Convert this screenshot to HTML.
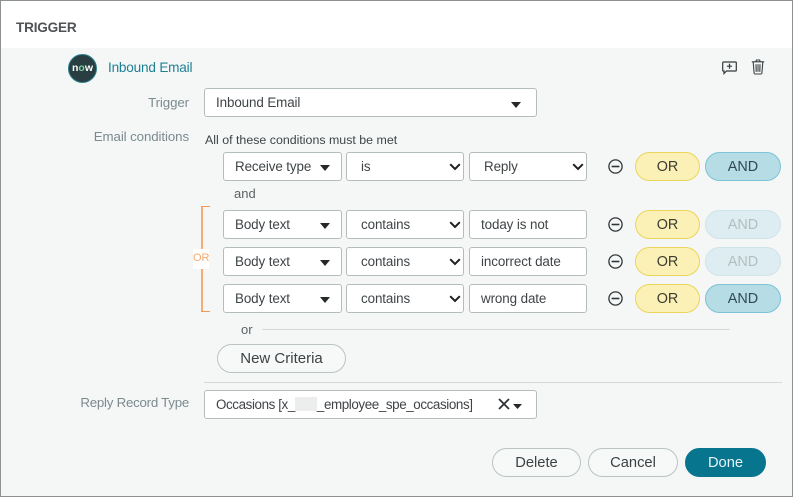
<!DOCTYPE html>
<html><head><meta charset="utf-8">
<style>
html,body{margin:0;padding:0;width:793px;height:497px;overflow:hidden;background:#f5f7f7}
body{position:relative;font-family:"Liberation Sans",sans-serif;color:#3a3f42}
.a{position:absolute;box-sizing:border-box;white-space:nowrap}
.t{font-size:13.3px;line-height:20px;height:20px;letter-spacing:-.1px}
.l{color:#7b8a8e;text-align:right;left:40px;width:149px}
.box{background:#fff;border:1px solid #b4bcbe;border-radius:3px;height:29px;font-size:13.4px;line-height:28px;padding-left:11px;color:#3f4447;letter-spacing:-.1px}
.pill{border-radius:15px;height:29px;font-size:14.4px;line-height:28px;text-align:center}
.or{left:635px;width:65px;background:#fbf1b6;border:1px solid #ead65c;color:#3d3d33}
.and{left:705px;width:76px;background:#b6dde5;border:1px solid #7cc3d5;color:#2f4a55}
.off{background:#deedf1;border:1px solid #cfe3ea;color:#b3bec2}
.btn{border:1px solid #bcc3c4;border-radius:15px;background:#f7f9f9;text-align:center;font-size:14.7px;line-height:28px;color:#3c4144;height:29px}
svg{position:absolute;overflow:visible}
</style></head>
<body>
<div class="a" style="left:0;top:0;width:793px;height:48px;background:#fff"></div>
<div class="a" style="left:16px;top:18px;font-size:13.6px;line-height:20px;font-weight:bold;color:#505355;letter-spacing:-.2px">TRIGGER</div>

<div class="a" style="left:68px;top:54px;width:29px;height:29px;border-radius:50%;background:#293e40;border:1px solid #2b7f8e"></div>
<div class="a" style="left:68px;top:61px;width:29px;text-align:center;color:#fff;font:bold 10.5px/15px 'Liberation Sans',sans-serif">n<span style="color:#7fd1a5">o</span>w</div>
<div class="a t" style="left:108px;top:58px;color:#1f8094;font-size:13.6px;letter-spacing:-.2px">Inbound Email</div>

<svg style="left:722px;top:60px" width="15" height="15" viewBox="0 0 15 15" fill="none" stroke="#33383a" stroke-width="1.2"><path d="M1.5 2h12a.8.8 0 0 1 .8.8v7.4a.8.8 0 0 1-.8.8H4.5L2 13.5V11h-.5a.8.8 0 0 1-.8-.8V2.8A.8.8 0 0 1 1.5 2zM7.5 3.6v5.2M4.9 6.2h5.2"/></svg>
<svg style="left:751px;top:59px" width="14" height="16" viewBox="0 0 14 16" fill="none" stroke="#3a3f41" stroke-width="1.1"><path d="M.8 2.8h12.4M4.8 2.6l.6-1.6h3.2l.6 1.6M2.2 3l.9 11.2a1 1 0 0 0 1 .8h5.8a1 1 0 0 0 1-.8L11.8 3M5 5.2l.2 7.6M7 5.2v7.6M9 5.2l-.2 7.6"/></svg>

<div class="a t l" style="top:93px">Trigger</div>
<div class="a box" style="left:204px;top:88px;width:333px">Inbound Email</div>
<svg style="left:511px;top:102px" width="10" height="6"><path d="M0 0h10L5 6z" fill="#26292b"/></svg>

<div class="a t l" style="top:127px">Email conditions</div>
<div class="a" style="left:205px;top:131px;font-size:12.4px;line-height:18px;color:#3f4447">All of these conditions must be met</div>

<!-- row 1 -->
<div class="a box" style="left:223px;top:152px;width:119px">Receive type</div>
<svg style="left:320px;top:165px" width="10" height="6"><path d="M0 0h10L5 6z" fill="#26292b"/></svg>
<div class="a box" style="left:346px;top:152px;width:118px;padding-left:14px">is</div>
<svg style="left:449px;top:163px" width="12" height="8"><path d="M1.2 1.2L6 6l4.8-4.8" fill="none" stroke="#1e2022" stroke-width="2"/></svg>
<div class="a box" style="left:469px;top:152px;width:118px;padding-left:14px">Reply</div>
<svg style="left:572px;top:163px" width="12" height="8"><path d="M1.2 1.2L6 6l4.8-4.8" fill="none" stroke="#1e2022" stroke-width="2"/></svg>
<svg style="left:608px;top:159px" width="15" height="15" fill="none" stroke="#303436" stroke-width="1.3"><circle cx="7.5" cy="7.5" r="6.6"/><path d="M3.6 7.5h7.8" stroke-width="1.6"/></svg>
<div class="a pill or" style="top:152px">OR</div>
<div class="a pill and" style="top:152px">AND</div>

<div class="a" style="left:234px;top:185px;font-size:13px;line-height:18px;color:#5a6265">and</div>

<!-- bracket -->
<div class="a" style="left:201px;top:206px;width:2px;height:106px;background:#f8ab72"></div>
<div class="a" style="left:201px;top:206px;width:9px;height:1px;background:#f59a56"></div>
<div class="a" style="left:201px;top:311px;width:9px;height:1px;background:#f59a56"></div>
<div class="a" style="left:193px;top:249px;width:16px;height:20px;background:#fff;color:#f8a868;font-size:11px;line-height:19px;text-align:center">OR</div>

<!-- row 2 -->
<div class="a box" style="left:223px;top:210px;width:119px">Body text</div>
<svg style="left:320px;top:223px" width="10" height="6"><path d="M0 0h10L5 6z" fill="#26292b"/></svg>
<div class="a box" style="left:346px;top:210px;width:118px;padding-left:14px">contains</div>
<svg style="left:449px;top:221px" width="12" height="8"><path d="M1.2 1.2L6 6l4.8-4.8" fill="none" stroke="#1e2022" stroke-width="2"/></svg>
<div class="a box" style="left:469px;top:210px;width:118px">today is not</div>
<svg style="left:608px;top:217px" width="15" height="15" fill="none" stroke="#303436" stroke-width="1.3"><circle cx="7.5" cy="7.5" r="6.6"/><path d="M3.6 7.5h7.8" stroke-width="1.6"/></svg>
<div class="a pill or" style="top:210px">OR</div>
<div class="a pill and off" style="top:210px">AND</div>

<!-- row 3 -->
<div class="a box" style="left:223px;top:247px;width:119px">Body text</div>
<svg style="left:320px;top:260px" width="10" height="6"><path d="M0 0h10L5 6z" fill="#26292b"/></svg>
<div class="a box" style="left:346px;top:247px;width:118px;padding-left:14px">contains</div>
<svg style="left:449px;top:258px" width="12" height="8"><path d="M1.2 1.2L6 6l4.8-4.8" fill="none" stroke="#1e2022" stroke-width="2"/></svg>
<div class="a box" style="left:469px;top:247px;width:118px">incorrect date</div>
<svg style="left:608px;top:254px" width="15" height="15" fill="none" stroke="#303436" stroke-width="1.3"><circle cx="7.5" cy="7.5" r="6.6"/><path d="M3.6 7.5h7.8" stroke-width="1.6"/></svg>
<div class="a pill or" style="top:247px">OR</div>
<div class="a pill and off" style="top:247px">AND</div>

<!-- row 4 -->
<div class="a box" style="left:223px;top:284px;width:119px">Body text</div>
<svg style="left:320px;top:297px" width="10" height="6"><path d="M0 0h10L5 6z" fill="#26292b"/></svg>
<div class="a box" style="left:346px;top:284px;width:118px;padding-left:14px">contains</div>
<svg style="left:449px;top:295px" width="12" height="8"><path d="M1.2 1.2L6 6l4.8-4.8" fill="none" stroke="#1e2022" stroke-width="2"/></svg>
<div class="a box" style="left:469px;top:284px;width:118px">wrong date</div>
<svg style="left:608px;top:291px" width="15" height="15" fill="none" stroke="#303436" stroke-width="1.3"><circle cx="7.5" cy="7.5" r="6.6"/><path d="M3.6 7.5h7.8" stroke-width="1.6"/></svg>
<div class="a pill or" style="top:284px">OR</div>
<div class="a pill and" style="top:284px">AND</div>

<div class="a" style="left:241px;top:321px;font-size:13px;line-height:18px;color:#5a6265">or</div>
<div class="a" style="left:262px;top:329px;width:468px;height:1px;background:#d3d8d9"></div>
<div class="a btn" style="left:217px;top:344px;width:129px;font-size:15px">New Criteria</div>
<div class="a" style="left:204px;top:382px;width:578px;height:1px;background:#d3d8d9"></div>

<div class="a t l" style="top:393px;letter-spacing:-.25px">Reply Record Type</div>
<div class="a box" style="left:204px;top:390px;width:333px;letter-spacing:-.4px">Occasions [x_<span style="display:inline-block;width:22px;height:14px;background:#eceeee;vertical-align:-2px"></span>_employee_spe_occasions]</div>
<svg style="left:498px;top:398px" width="12" height="12"><path d="M1 1l10 10M11 1L1 11" stroke="#2f3336" stroke-width="1.8" fill="none"/></svg>
<svg style="left:513px;top:404px" width="9" height="5"><path d="M0 0h9L4.5 5z" fill="#26292b"/></svg>

<div class="a btn" style="left:492px;top:448px;width:89px">Delete</div>
<div class="a btn" style="left:588px;top:448px;width:90px">Cancel</div>
<div class="a btn" style="left:685px;top:448px;width:81px;background:#08758f;border-color:#08758f;color:#e8f4f6">Done</div>

<!-- frame -->
<div class="a" style="left:0;top:0;width:793px;height:497px;border:1px solid #8d9192;pointer-events:none"></div>
</body></html>
